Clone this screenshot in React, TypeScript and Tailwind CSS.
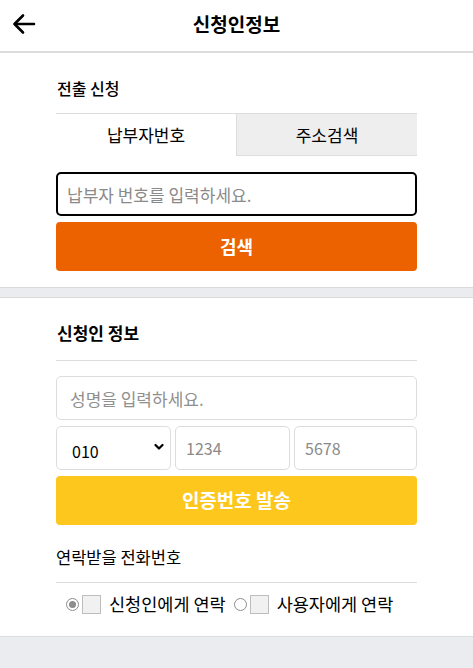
import React from 'react';

const font = { fontFamily: '"Noto Sans CJK KR", "Noto Sans", sans-serif' };

const Divider = () => <div className="h-px bg-[#dddddd]" />;

const App: React.FC = () => {
  return (
    <div className="min-h-[668px] bg-[#ebecef] text-black" style={font}>
      {/* Header */}
      <header className="relative flex h-[53px] items-center justify-center border-b-2 border-[#dcdcdc] bg-white">
        <button className="absolute left-[11px] top-[11px] flex h-[26px] w-[26px] items-center justify-center">
          <svg width="24" height="22" viewBox="0 0 24 22" fill="none" stroke="black" strokeWidth="2.6" strokeLinecap="round" strokeLinejoin="round">
            <path d="M22 11H3" />
            <path d="M11 2.5L2.5 11L11 19.5" />
          </svg>
        </button>
        <h1 className="text-[19px] font-bold leading-none -mt-[4px]">신청인정보</h1>
      </header>

      {/* 전출 신청 */}
      <section className="bg-white px-[56px] pt-[24px] pb-[16px]">
        <h2 className="text-[16px] font-medium leading-[22px] pl-px">전출 신청</h2>
        <div className="mt-[14px] flex h-[43px] border-t border-[#dddddd]">
          <button className="flex flex-1 items-center justify-center bg-white text-[17px]">납부자번호</button>
          <button className="flex flex-1 items-center justify-center border-l border-b border-[#dddddd] bg-[#eeeeee] text-[17px]">주소검색</button>
        </div>
        <input
          className="mt-[16px] h-[44px] w-full rounded-[5px] border-2 border-black px-[9px] text-[17px] outline-none placeholder:text-[#8a8a8a]"
          placeholder="납부자 번호를 입력하세요."
        />
        <button className="mt-[6px] h-[49px] w-full rounded-[4px] bg-[#ec6200] text-[18px] font-bold text-white">검색</button>
      </section>

      <div className="h-[11px] border-y border-[#dadada] bg-[#ebecef]" />

      {/* 신청인 정보 */}
      <section className="bg-white px-[56px] pt-[24px] pb-[21px] border-b border-[#dcdcdc]">
        <h2 className="text-[17px] font-bold leading-[22px] pl-px">신청인 정보</h2>
        <div className="mt-[16px]"><Divider /></div>
        <input
          className="mt-[15px] h-[44px] w-full rounded-[5px] border border-[#dddddd] px-[13px] text-[17px] outline-none placeholder:text-[#8f8f8f]"
          placeholder="성명을 입력하세요."
        />
        <div className="mt-[6px] flex h-[44px] gap-[4px]">
          <div className="relative flex w-[115px] items-center rounded-[5px] border border-[#dddddd] pl-[15px] pt-[6px]">
            <span className="text-[16px]">010</span>
            <svg className="absolute right-[6px] top-[16px]" width="10" height="8" viewBox="0 0 10 8" fill="none" stroke="black" strokeWidth="2.2" strokeLinecap="round" strokeLinejoin="round">
              <path d="M1.5 2L5 5.5L8.5 2" />
            </svg>
          </div>
          <input
            className="w-[115px] rounded-[5px] border border-[#dddddd] px-[10px] text-[16px] outline-none placeholder:text-[#8a8a8a]"
            placeholder="1234"
          />
          <input
            className="min-w-0 flex-1 rounded-[5px] border border-[#dddddd] px-[10px] text-[16px] outline-none placeholder:text-[#8a8a8a]"
            placeholder="5678"
          />
        </div>
        <button className="mt-[6px] h-[49px] w-full rounded-[4px] bg-[#fec71e] text-[19px] font-bold text-white">인증번호 발송</button>

        <h3 className="mt-[21px] text-[16.5px] leading-[22px]">연락받을 전화번호</h3>
        <div className="mt-[14px]"><Divider /></div>
        <div className="mt-[10px] flex items-center pl-[10px] text-[17.5px] leading-[22px]">
          <span className="flex h-[13px] w-[13px] items-center justify-center rounded-full border border-[#8d8d8d] bg-white">
            <span className="h-[7px] w-[7px] rounded-full bg-[#8d8d8d]" />
          </span>
          <span className="ml-[3px] h-[19px] w-[19px] border border-[#bdbdbd] bg-[#f1f1f1]" />
          <span className="ml-[8px]">신청인에게 연락</span>
          <span className="ml-[8px] h-[13px] w-[13px] rounded-full border border-[#8d8d8d] bg-white" />
          <span className="ml-[3px] h-[19px] w-[19px] border border-[#bdbdbd] bg-[#f1f1f1]" />
          <span className="ml-[8px]">사용자에게 연락</span>
        </div>
      </section>
    </div>
  );
};

export default App;
